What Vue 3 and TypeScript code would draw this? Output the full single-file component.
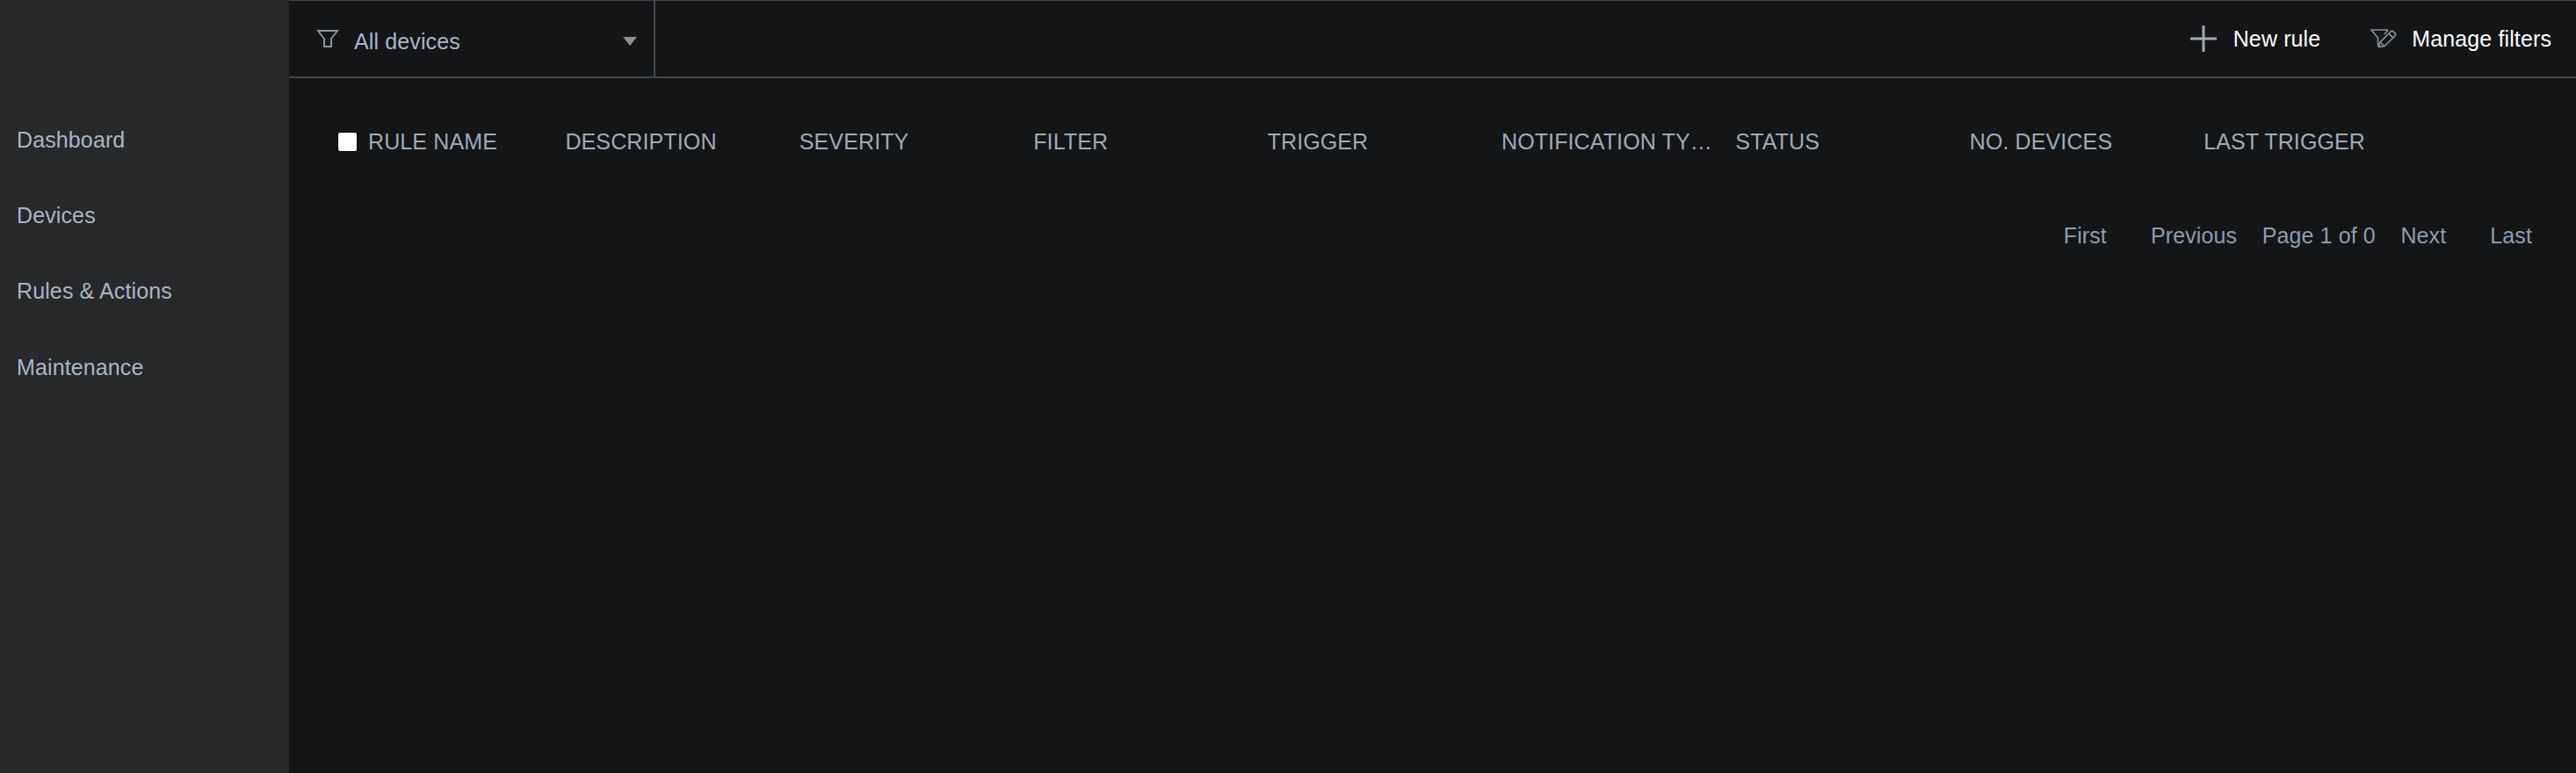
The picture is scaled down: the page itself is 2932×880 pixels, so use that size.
<script setup lang="ts">
const navItems: string[] = ['Dashboard', 'Devices', 'Rules & Actions', 'Maintenance']

const columns: string[] = [
  'DESCRIPTION',
  'SEVERITY',
  'FILTER',
  'TRIGGER',
  'NOTIFICATION TYPE',
  'STATUS',
  'NO. DEVICES',
  'LAST TRIGGER'
]
</script>

<template>
  <div class="page">
    <aside class="sidebar">
      <a v-for="item in navItems" :key="item" class="nav-item">{{ item }}</a>
    </aside>

    <main class="content">
      <header class="toolbar">
        <div class="device-select">
          <svg class="filter-icon" width="26" height="22" viewBox="0 0 26 22" fill="none">
            <path d="M2 2H24L17 11V20H9V11Z" stroke="#8d949c" stroke-width="2" />
          </svg>
          <span class="device-label">All devices</span>
          <span class="caret"></span>
        </div>
        <div class="actions">
          <button class="action new-rule">
            <svg width="30" height="30" viewBox="0 0 30 30" fill="none">
              <path d="M15 0V30M0 15H30" stroke="#a3aab3" stroke-width="3" />
            </svg>
            New rule
          </button>
          <button class="action manage">
            <svg width="30" height="22" viewBox="0 0 30 22" fill="none" stroke="#8d949c" stroke-width="1.6">
              <path d="M20 1H1L8.5 10V18.5H11M20 1L16 6" />
              <path d="M9.5 20.5L11 15L22.5 3.5Q24.5 1.5 26.5 3.2L27.8 4.5Q29.5 6.5 27.5 8.5L16 19.5Z" />
              <path d="M20.8 5.2L26 10.2M11 15L15.8 19.5" />
            </svg>
            Manage filters
          </button>
        </div>
      </header>

      <div class="table-head">
        <div class="cell first">
          <span class="checkbox"></span>
          <span class="cell-text">RULE NAME</span>
        </div>
        <div v-for="col in columns" :key="col" class="cell">
          <span class="cell-text">{{ col }}</span>
        </div>
      </div>

      <nav class="pagination">
        <button class="page-btn">First</button>
        <button class="page-btn">Previous</button>
        <span class="page-info">Page 1 of 0</span>
        <button class="page-btn">Next</button>
        <button class="page-btn">Last</button>
      </nav>
    </main>
  </div>
</template>

<style>
html,
body {
  margin: 0;
  background: #131517;
}
</style>

<style scoped>
.page {
  display: flex;
  width: 2932px;
  height: 880px;
  overflow: hidden;
  font-family: 'Liberation Sans', Arial, sans-serif;
  font-size: 25px;
  letter-spacing: 0.12px;
  background: #131517;
}
.sidebar {
  display: flex;
  flex-direction: column;
  flex: none;
  width: 329px;
  padding: 116px 0 0 19px;
  box-sizing: border-box;
  background: #26282a;
}
.nav-item {
  display: flex;
  align-items: center;
  height: 86.4px;
  color: #a9b6c8;
}
.content {
  display: flex;
  flex-direction: column;
  flex: 1;
  min-width: 0;
}
.toolbar {
  display: flex;
  justify-content: space-between;
  height: 89px;
  box-sizing: border-box;
  border-top: 1px solid #3f4347;
  border-bottom: 2px solid #44484c;
}
.device-select {
  display: flex;
  align-items: center;
  width: 417px;
  padding: 6px 19px 0 31px;
  box-sizing: border-box;
  border-right: 2px solid #44484c;
  color: #a9b6c8;
}
.filter-icon {
  margin-top: -6px;
}
.device-label {
  flex: 1;
  margin-left: 17px;
}
.caret {
  border-left: 8.5px solid transparent;
  border-right: 8.5px solid transparent;
  border-top: 10px solid #8f8f8f;
}
.actions {
  display: flex;
  align-items: center;
  padding-right: 28px;
  gap: 57px;
}
.action {
  display: flex;
  align-items: center;
  padding: 0;
  border: none;
  background: none;
  color: #fff;
  font: inherit;
  letter-spacing: inherit;
}
.new-rule svg {
  margin-right: 19px;
}
.manage svg {
  margin-right: 17px;
}
.table-head {
  display: grid;
  grid-template-columns: repeat(9, 266.4px);
  align-items: center;
  height: 145px;
  padding-left: 48px;
  box-sizing: border-box;
}
.cell {
  display: flex;
  align-items: center;
  padding-right: 26px;
  min-width: 0;
  color: #9fabb9;
}
.first {
  padding-left: 7px;
}
.cell-text {
  overflow: hidden;
  white-space: nowrap;
  text-overflow: ellipsis;
}
.checkbox {
  flex: none;
  width: 21px;
  height: 21px;
  margin-right: 12px;
  border: 1px solid #000;
  border-radius: 3px;
  background: #fff;
}
.pagination {
  display: flex;
  justify-content: flex-end;
  align-items: center;
  height: 68px;
  padding-right: 25px;
  color: #8d9db1;
}
.page-btn {
  padding: 0 25px;
  border: none;
  background: none;
  color: inherit;
  font: inherit;
  letter-spacing: inherit;
}
.page-info {
  padding: 0 3.5px;
}
</style>
